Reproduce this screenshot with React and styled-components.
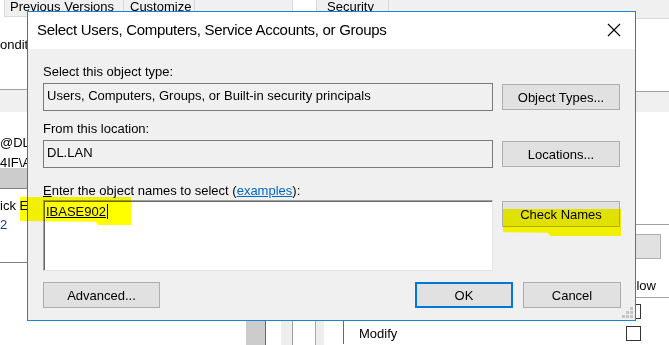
import React from "react";
import styled, { createGlobalStyle } from "styled-components";

const GlobalStyle = createGlobalStyle`
  html, body {
    margin: 0;
    padding: 0;
    background: #ffffff;
    overflow: hidden;
  }
  * {
    box-sizing: border-box;
  }
`;

const Desktop = styled.div`
  position: relative;
  width: 669px;
  height: 345px;
  overflow: hidden;
  background: #ffffff;
  font-family: "Liberation Sans", Arial, sans-serif;
  font-size: 13px;
  color: #000000;
`;

/* ---------- window behind the dialog ---------- */

const BackWindow = styled.div`
  display: flex;
  flex-direction: column;
  width: 669px;
  height: 345px;
  & > * {
    flex-shrink: 0;
  }
`;

const TabStrip = styled.div`
  display: flex;
  height: 19px;
  padding-left: 4px;
`;

const Tab = styled.div`
  width: ${(p) => p.w}px;
  height: 17px;
  padding-left: ${(p) => p.pad || 5}px;
  background: ${(p) => (p.blank ? "#ffffff" : "#f0f0f0")};
  border: 1px solid #d9d9d9;
  border-left: none;
  border-top: none;
  line-height: 14px;
  white-space: nowrap;
  overflow: hidden;
  &:first-child {
    border-left: 1px solid #d9d9d9;
  }
`;

const TabFill = styled.div`
  flex: 1;
  height: 19px;
  background: #f0f0f0;
  border-bottom: 1px solid #d9d9d9;
`;

const TopArea = styled.div`
  height: 70px;
  padding-top: 16px;
`;

const Peek = styled.div`
  width: 27px;
  height: ${(p) => p.h || 20}px;
  line-height: ${(p) => p.lh || p.h || 20}px;
  overflow: hidden;
  white-space: nowrap;
  color: ${(p) => p.c || "#000000"};
`;

const HeaderBand = styled.div`
  display: flex;
  height: 23px;
`;

const HeaderCell = styled.div`
  width: ${(p) => p.w}px;
  flex: ${(p) => (p.w ? "none" : 1)};
  margin-top: ${(p) => p.off || 0}px;
  border-top: 1px solid #a0a0a0;
  background: #f0f0f0;
`;

const BackBody = styled.div`
  height: 233px;
  display: grid;
  grid-template-columns: 344px 1fr;
  overflow: hidden;
`;

const LeftList = styled.div`
  display: flex;
  flex-direction: column;
  padding-top: 21px;
  & > * {
    flex-shrink: 0;
  }
`;

const Gap = styled.div`
  height: ${(p) => p.h}px;
`;

const SelectedRow = styled.div`
  height: 21px;
  background: #cccccc;
  border-bottom: 1px solid #808080;
`;

const ListBottomRule = styled.div`
  height: 1px;
  width: 30px;
  background: #808080;
`;

const Scrollers = styled.div`
  display: flex;
  margin-top: 57px;
  height: 25px;
  padding-left: 246px;
`;

const ScrollPiece = styled.div`
  width: ${(p) => p.w}px;
  background: ${(p) => p.bg || "transparent"};
  border-right: ${(p) => (p.line ? `1px solid ${p.line}` : "none")};
`;

const RightPanel = styled.div`
  display: flex;
  flex-direction: column;
  padding-top: 112px;
  & > * {
    flex-shrink: 0;
  }
`;

const Rule = styled.div`
  height: 1px;
  background: #a0a0a0;
`;

const BackButtonRow = styled.div`
  display: flex;
  justify-content: flex-end;
  padding: 9px 8px 0 0;
  height: 35px;
`;

const BackButton = styled.div`
  width: 26px;
  height: 25px;
  background: #e1e1e1;
  border: 1px solid #adadad;
`;

const PermHead = styled.div`
  height: 38px;
  display: flex;
  align-items: flex-end;
  justify-content: flex-end;
  padding: 0 13px 4px 0;
  line-height: 15px;
  border-bottom: 1px solid #a0a0a0;
`;

const PermGroup = styled.div`
  display: flex;
  flex-direction: column;
  padding-top: 2px;
  margin-left: -1px;
  border-left: 1px solid #696969;
`;

const PermRow = styled.div`
  height: 22px;
  display: flex;
  align-items: center;
  justify-content: space-between;
  padding: 0 28px 0 15px;
`;

const CheckBox = styled.div`
  width: 15px;
  height: 15px;
  border: 1px solid #333333;
  background: #ffffff;
`;

/* ---------- the picker dialog ---------- */

const Dialog = styled.div`
  position: absolute;
  left: 27px;
  top: 11px;
  width: 609px;
  height: 310px;
  display: flex;
  flex-direction: column;
  background: #f0f0f0;
  border: 1px solid #1883d7;
`;

const TitleBar = styled.div`
  height: 37px;
  display: flex;
  align-items: center;
  justify-content: space-between;
  padding: 0 14px 2px 9px;
  background: #ffffff;
`;

const Title = styled.div`
  font-size: 15px;
  letter-spacing: -0.3px;
  white-space: nowrap;
`;

const CloseButton = styled.div`
  display: flex;
  width: 14px;
  height: 14px;
`;

const Body = styled.div`
  flex: 1;
  display: flex;
  flex-direction: column;
  padding: 15px 14px 0 15px;
`;

const FieldLabel = styled.div`
  height: 15px;
  line-height: 15px;
  margin-top: ${(p) => p.top || 0}px;
  white-space: nowrap;
`;

const FieldRow = styled.div`
  display: grid;
  grid-template-columns: 450px 118px;
  column-gap: 9px;
  align-items: start;
  margin-top: ${(p) => p.top || 4}px;
`;

const ReadOnlyBox = styled.div`
  height: 28px;
  padding: 0 3px;
  line-height: 24px;
  border: 1px solid #7a7a7a;
  background: #f0f0f0;
  white-space: nowrap;
`;

const NamesBox = styled.div`
  height: 71px;
  padding: 3px 2px;
  background: #ffffff;
  border-top: 1px solid #a0a0a0;
  border-left: 1px solid #a0a0a0;
  border-right: 1px solid #e3e3e3;
  border-bottom: 1px solid #e3e3e3;
  box-shadow: inset 1px 1px 0 #696969;
`;

const TypedName = styled.span`
  text-decoration: underline;
  border-right: 1px solid #000000;
  padding-right: 1px;
`;

const Button = styled.div`
  height: ${(p) => p.h || 26}px;
  display: flex;
  align-items: center;
  justify-content: center;
  margin-top: ${(p) => p.top || 0}px;
  background: #e1e1e1;
  border: ${(p) => (p.primary ? "2px solid #0078d7" : "1px solid #adadad")};
  width: ${(p) => (p.w ? `${p.w}px` : "auto")};
`;

const Footer = styled.div`
  display: flex;
  align-items: center;
  margin-top: 11px;
  gap: 10px;
`;

const FooterSpacer = styled.div`
  flex: 1;
`;

const Link = styled.span`
  color: #0066cc;
  text-decoration: underline;
`;

const AccessKey = styled.span`
  text-decoration: underline;
`;

const Grip = styled.div`
  position: absolute;
  right: 2px;
  bottom: 2px;
  display: flex;
`;

/* marker highlights drawn over the screenshot */
const Marker = styled.div`
  position: absolute;
  left: ${(p) => p.x}px;
  top: ${(p) => p.y}px;
  width: ${(p) => p.w}px;
  height: ${(p) => p.h}px;
  background: #ffff00;
  mix-blend-mode: multiply;
  clip-path: ${(p) => p.clip};
  pointer-events: none;
`;

function CloseIcon() {
  return (
    <svg width="14" height="14" viewBox="0 0 14 14">
      <path d="M1 1 L13 13 M13 1 L1 13" stroke="#000" strokeWidth="1.1" fill="none" />
    </svg>
  );
}

function GripIcon() {
  const dots = [
    [8, 0],
    [4, 4],
    [8, 4],
    [0, 8],
    [4, 8],
    [8, 8],
  ];
  return (
    <svg width="11" height="11" viewBox="0 0 11 11">
      {dots.map(([x, y]) => (
        <rect key={`${x}-${y}`} x={x} y={y} width="3" height="3" fill="#c4c4c4" />
      ))}
    </svg>
  );
}

export default function App() {
  return (
    <>
      <GlobalStyle />
      <Desktop>
        <BackWindow>
          <TabStrip>
            <Tab w={120} pad={5}>Previous Versions</Tab>
            <Tab w={71} pad={6}>Customize</Tab>
            <Tab w={98} />
            <Tab w={24} blank />
            <Tab w={72} pad={10}>Security</Tab>
            <TabFill />
          </TabStrip>
          <TopArea>
            <Peek h={20}>onditi</Peek>
          </TopArea>
          <HeaderBand>
            <HeaderCell w={344} />
            <HeaderCell off={2} />
          </HeaderBand>
          <BackBody>
            <LeftList>
              <Peek h={20}>@DL.</Peek>
              <Peek h={15} lh={20}>4IF\A</Peek>
              <SelectedRow />
              <Gap h={8} />
              <Peek h={18}>ick E</Peek>
              <Peek h={20} c="#1a3a8a">2</Peek>
              <Gap h={27} />
              <ListBottomRule />
              <Scrollers>
                <ScrollPiece w={20} bg="#cccccc" line="#696969" />
                <ScrollPiece w={15} />
                <ScrollPiece w={12} bg="#eeeeee" line="#a0a0a0" />
                <ScrollPiece w={23} line="#a8a8a8" />
                <ScrollPiece w={8} bg="#eeeeee" />
              </Scrollers>
            </LeftList>
            <RightPanel>
              <Rule />
              <BackButtonRow>
                <BackButton />
              </BackButtonRow>
              <PermHead>Allow</PermHead>
              <PermGroup>
                <PermRow>
                  <span>Full control</span>
                  <CheckBox />
                </PermRow>
                <PermRow>
                  <span>Modify</span>
                  <CheckBox />
                </PermRow>
              </PermGroup>
            </RightPanel>
          </BackBody>
        </BackWindow>

        <Dialog>
          <TitleBar>
            <Title>Select Users, Computers, Service Accounts, or Groups</Title>
            <CloseButton>
              <CloseIcon />
            </CloseButton>
          </TitleBar>
          <Body>
            <FieldLabel>Select this object type:</FieldLabel>
            <FieldRow>
              <ReadOnlyBox>Users, Computers, Groups, or Built-in security principals</ReadOnlyBox>
              <Button top={1}>Object Types...</Button>
            </FieldRow>

            <FieldLabel top={10}>From this location:</FieldLabel>
            <FieldRow>
              <ReadOnlyBox>DL.LAN</ReadOnlyBox>
              <Button top={1}>Locations...</Button>
            </FieldRow>

            <FieldLabel top={15}>
              <AccessKey>E</AccessKey>nter the object names to select (<Link>examples</Link>):
            </FieldLabel>
            <FieldRow top={2}>
              <NamesBox>
                <TypedName>IBASE902</TypedName>
              </NamesBox>
              <Button top={1}>Check Names</Button>
            </FieldRow>

            <Footer>
              <Button w={117} h={26}>Advanced...</Button>
              <FooterSpacer />
              <Button w={98} h={26} primary>OK</Button>
              <Button w={98} h={26}>Cancel</Button>
            </Footer>
          </Body>
          <Grip>
            <GripIcon />
          </Grip>
        </Dialog>

        <Marker
          x={20}
          y={197}
          w={111}
          h={28}
          clip="polygon(0 0, 100% 0, 100% 100%, 70% 100%, 68% 88%, 0 86%)"
        />
        <Marker
          x={503}
          y={209}
          w={118}
          h={27}
          clip="polygon(0 0, 100% 0, 100% 100%, 40% 100%, 38% 88%, 0 86%)"
        />
      </Desktop>
    </>
  );
}
